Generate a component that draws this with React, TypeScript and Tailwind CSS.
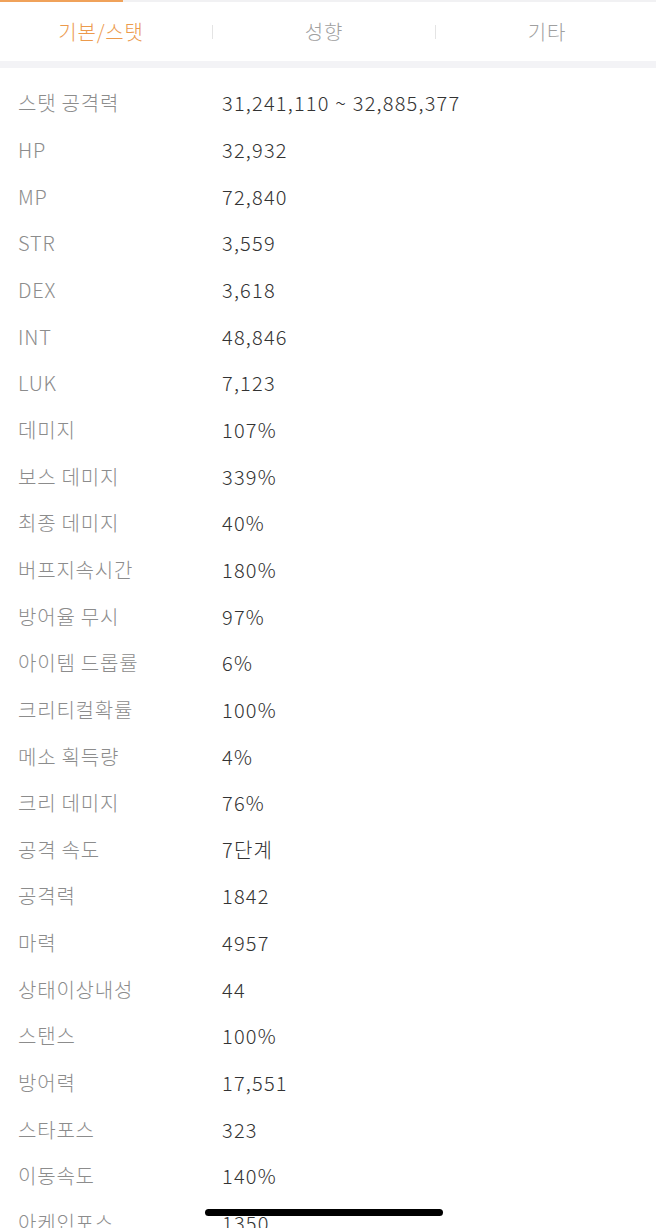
const stats: [string, string][] = [
  ['스탯 공격력', '31,241,110 ~ 32,885,377'],
  ['HP', '32,932'],
  ['MP', '72,840'],
  ['STR', '3,559'],
  ['DEX', '3,618'],
  ['INT', '48,846'],
  ['LUK', '7,123'],
  ['데미지', '107%'],
  ['보스 데미지', '339%'],
  ['최종 데미지', '40%'],
  ['버프지속시간', '180%'],
  ['방어율 무시', '97%'],
  ['아이템 드롭률', '6%'],
  ['크리티컬확률', '100%'],
  ['메소 획득량', '4%'],
  ['크리 데미지', '76%'],
  ['공격 속도', '7단계'],
  ['공격력', '1842'],
  ['마력', '4957'],
  ['상태이상내성', '44'],
  ['스탠스', '100%'],
  ['방어력', '17,551'],
  ['스타포스', '323'],
  ['이동속도', '140%'],
  ['아케인포스', '1350'],
];

export default function App() {
  return (
    <div
      className="relative h-[1228px] w-[656px] overflow-hidden bg-white"
      style={{ fontFamily: '"Noto Sans CJK KR", "Noto Sans", sans-serif' }}
    >
      {/* progress line */}
      <div className="flex h-[2px]">
        <div className="w-[123px] bg-[#f0a25a]" />
        <div className="flex-1 bg-[#f1f1f3]" />
      </div>

      {/* Tabs */}
      <div className="flex h-[59px] items-center text-[20px] font-light tracking-[0.04em]">
        <div className="w-[202px] text-center text-[#ec9a4c]">기본/스탯</div>
        <div className="mx-[10px] h-[14px] w-px bg-[#e4e4e4]" />
        <div className="w-[202px] text-center text-[#a0a0a0]">성향</div>
        <div className="mx-[10px] h-[14px] w-px bg-[#e4e4e4]" />
        <div className="w-[202px] text-center text-[#a0a0a0]">기타</div>
      </div>
      <div className="h-[7px] bg-[#f3f3f6]" />

      {/* Stats */}
      <div className="flex flex-col pt-[12px] text-[20px] font-light">
        {stats.map(([label, value]) => (
          <div key={label} className="flex h-[46.67px] items-center">
            <div className="w-[222px] pl-[18px] tracking-[0.04em] text-[#8c8c8c]">{label}</div>
            <div className="tracking-[0.06em] text-[#333333]">{value}</div>
          </div>
        ))}
      </div>

      {/* home indicator */}
      <div className="absolute bottom-[12px] left-[205px] h-[7px] w-[238px] rounded-full bg-black" />
    </div>
  );
}
